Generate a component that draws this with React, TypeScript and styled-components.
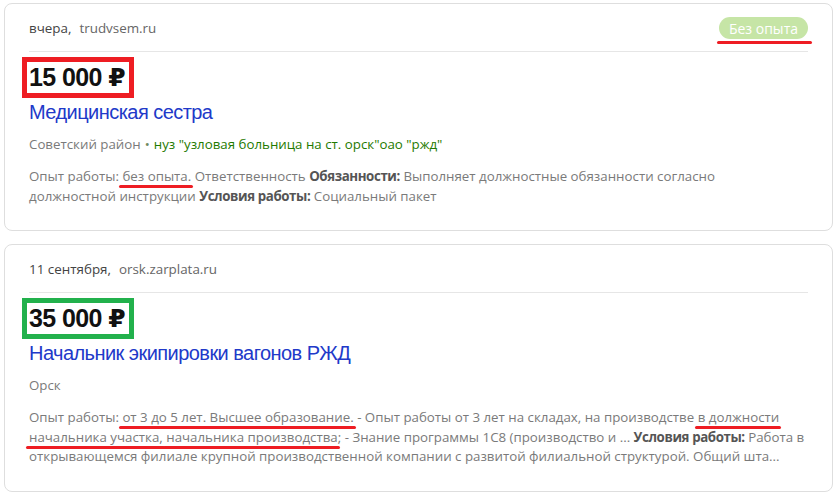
import React from "react";
import styled, { createGlobalStyle } from "styled-components";

const Global = createGlobalStyle`
  html, body { margin: 0; padding: 0; background: #ffffff; }
  body { font-family: "Open Sans", "Liberation Sans", sans-serif; }
`;

const Page = styled.div`
  width: 840px;
  padding: 3px 7px 0 4px;
  box-sizing: border-box;
  display: flex;
  flex-direction: column;
  gap: 13px;
`;

const Card = styled.div`
  border: 1px solid #dedede;
  border-radius: 8px;
  padding: 13px 24px 24px 24px;
  background: #fff;
`;

const Header = styled.div`
  display: flex;
  align-items: center;
  justify-content: space-between;
  height: 22px;
  padding-bottom: 12px;
  border-bottom: 1px solid #e6e6e6;
`;

const Meta = styled.div`
  font-size: 13.4px;
  color: #444;
  display: flex;
  gap: 8px;
`;

const Source = styled.span`
  color: #666;
`;

const Badge = styled.span`
  position: relative;
  display: inline-flex;
  align-items: center;
  height: 22px;
  padding: 0 10px;
  border-radius: 11px;
  background: #c6e5a6;
  color: #fff;
  font-size: 14px;
  &::after {
    content: "";
    position: absolute;
    left: -2px;
    right: -4px;
    bottom: -5px;
    height: 3px;
    border-radius: 2px;
    background: #ee1d23;
  }
`;

const PriceRow = styled.div`
  margin-top: 10px;
  display: flex;
`;

const Price = styled.span<{ $frame: string }>`
  position: relative;
  font-family: "Liberation Sans", "DejaVu Sans", sans-serif;
  font-weight: 700;
  font-size: 25px;
  line-height: 30px;
  color: #111;
  letter-spacing: -0.6px;
  &::after {
    content: "";
    position: absolute;
    left: -7px;
    right: -9px;
    top: -5px;
    bottom: -6px;
    border: 5px solid ${(p) => p.$frame};
  }
`;

const Title = styled.div`
  margin-top: 6px;
  font-family: "Liberation Sans", Arial, sans-serif;
  font-size: 20px;
  line-height: 28px;
  letter-spacing: -0.55px;
  color: #2139c9;
`;

const Location = styled.div`
  margin-top: 9px;
  font-size: 13.3px;
  line-height: 18px;
  color: #7a7a7a;
`;

const Dot = styled.span`
  color: #6f8a60;
  margin: 0 4px;
`;

const Company = styled.span`
  color: #1f7a00;
`;

const Description = styled.div<{ $maxWidth?: number }>`
  margin-top: 14px;
  max-width: ${(p) => (p.$maxWidth ? `${p.$maxWidth}px` : "none")};
  font-size: 13.3px;
  line-height: 19.5px;
  color: #7a7a7a;
  b {
    font-weight: 700;
    letter-spacing: -0.4px;
    color: #555;
  }
`;

const Marked = styled.span`
  position: relative;
  &::after {
    content: "";
    position: absolute;
    left: -3px;
    right: -2px;
    bottom: -3px;
    height: 3px;
    border-radius: 2px;
    background: #ee1d23;
  }
`;

export default function App() {
  return (
    <>
      <Global />
      <Page>
        <Card>
          <Header>
            <Meta>
              <span>вчера,</span>
              <Source>trudvsem.ru</Source>
            </Meta>
            <Badge>Без опыта</Badge>
          </Header>
          <PriceRow>
            <Price $frame="#ee1d23">15 000 ₽</Price>
          </PriceRow>
          <Title>Медицинская сестра</Title>
          <Location>
            Советский район<Dot>•</Dot>
            <Company>нуз "узловая больница на ст. орск"оао "ржд"</Company>
          </Location>
          <Description $maxWidth={765}>
            Опыт работы: <Marked>без опыта.</Marked> Ответственность{" "}
            <b>Обязанности:</b> Выполняет должностные обязанности согласно
            должностной инструкции <b>Условия работы:</b> Социальный пакет
          </Description>
        </Card>
        <Card>
          <Header>
            <Meta>
              <span>11 сентября,</span>
              <Source>orsk.zarplata.ru</Source>
            </Meta>
          </Header>
          <PriceRow>
            <Price $frame="#22b14c">35 000 ₽</Price>
          </PriceRow>
          <Title>Начальник экипировки вагонов РЖД</Title>
          <Location>Орск</Location>
          <Description>
            Опыт работы: <Marked>от 3 до 5 лет. Высшее образование.</Marked> -
            Опыт работы от 3 лет на складах, на производстве{" "}
            <Marked>в должности</Marked> <Marked>начальника участка,</Marked>{" "}
            <Marked>начальника производства</Marked>; - Знание программы 1С8
            (производство и ... <b>Условия работы:</b> Работа в открывающемся
            филиале крупной производственной компании с развитой филиальной
            структурой. Общий шта...
          </Description>
        </Card>
      </Page>
    </>
  );
}
